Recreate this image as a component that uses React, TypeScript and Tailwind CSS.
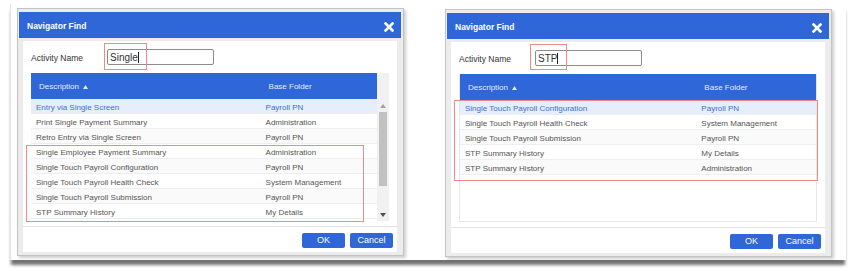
import React from "react";

type Row = [string, string];

const leftRows: Row[] = [
  ["Entry via Single Screen", "Payroll PN"],
  ["Print Single Payment Summary", "Administration"],
  ["Retro Entry via Single Screen", "Payroll PN"],
  ["Single Employee Payment Summary", "Administration"],
  ["Single Touch Payroll Configuration", "Payroll PN"],
  ["Single Touch Payroll Health Check", "System Management"],
  ["Single Touch Payroll Submission", "Payroll PN"],
  ["STP Summary History", "My Details"],
];

const rightRows: Row[] = [
  ["Single Touch Payroll Configuration", "Payroll PN"],
  ["Single Touch Payroll Health Check", "System Management"],
  ["Single Touch Payroll Submission", "Payroll PN"],
  ["STP Summary History", "My Details"],
  ["STP Summary History", "Administration"],
];

function CloseIcon() {
  return (
    <svg width="10" height="10" viewBox="0 0 10 10">
      <path d="M1.5 1.5 L8.5 8.5 M8.5 1.5 L1.5 8.5" stroke="#fff" strokeWidth="2.6" strokeLinecap="square" />
    </svg>
  );
}

function Scrollbar() {
  return (
    <div className="w-[12px] flex flex-col bg-[#f1f1f1]">
      <div className="h-[26px]" />
      <div className="h-[13px] flex items-center justify-center">
        <svg width="6" height="4" viewBox="0 0 6 4">
          <path d="M0 4 L3 0 L6 4 Z" fill="#a3a3a3" />
        </svg>
      </div>
      <div className="mx-[2px] h-[74px] bg-[#c1c1c1]" />
      <div className="flex-1" />
      <div className="h-[13px] flex items-center justify-center">
        <svg width="6" height="4" viewBox="0 0 6 4">
          <path d="M0 0 L6 0 L3 4 Z" fill="#505050" />
        </svg>
      </div>
    </div>
  );
}

function Dialog({
  query,
  rows,
  scroll,
  boxes,
}: {
  query: string;
  rows: Row[];
  scroll: boolean;
  boxes: { l: number; t: number; w: number; h: number }[];
}) {
  return (
    <div className="relative w-[387px] h-[248px] border border-[#c3c3c3] bg-[#ececec] pt-[3px] pl-[1px] pr-[2px] pb-[3px] shadow-[2px_2px_3px_rgba(0,0,0,0.2)] flex flex-col">
      {/* Title bar */}
      <div className="h-[26px] bg-[#2f67d8] flex items-center justify-between pl-[8px] pr-[7px] pt-[3px]">
        <span className="text-white font-bold text-[8.5px]">Navigator Find</span>
        <CloseIcon />
      </div>

      <div className="flex-1 px-[4px] pt-[3px] flex flex-col">
        <div className="flex-1 bg-white flex flex-col">
          {/* Search */}
          <div className="flex flex-col px-[8px] pt-[8px] pb-[5px] border-b border-[#e4e4e4]">
            <div className="flex items-center h-[16px]">
              <span className="w-[76px] text-[8.5px] text-[#333] pt-[3px]">Activity Name</span>
              <div className="w-[107px] h-[16px] border border-[#8c8c8c] rounded-[2px] flex items-center pl-[2px] text-[10px] text-[#333]">
                {query}
                <span className="inline-block w-px h-[11px] bg-[#222]" />
              </div>
            </div>

            <div className={`mt-[8px] h-[148px] flex ${scroll ? "" : "border border-[#e8e8e8] border-t-0"}`}>
              <div className="flex-1 flex flex-col">
                <div className="h-[26px] bg-[#2f67d8] grid grid-cols-[67.8%_1fr] items-center pt-[1px] text-[8px] text-[#e4ebfb]">
                  <span className="pl-[8px] flex items-center gap-[4px]">
                    Description
                    <svg width="5" height="4" viewBox="0 0 5 4">
                      <path d="M0 4 L2.5 0 L5 4 Z" fill="#e4ebfb" />
                    </svg>
                  </span>
                  <span className="pl-[3px]">Base Folder</span>
                </div>
                {rows.map(([d, f], i) => (
                  <div
                    key={i}
                    className={`h-[15px] grid grid-cols-[67.8%_1fr] items-center pt-[3px] text-[8px] border-b border-[#eeeeee] ${
                      i === 0
                        ? "bg-[#e6eefb] text-[#3b6fd2]"
                        : i % 2 === 1
                        ? "bg-white text-[#555]"
                        : "bg-[#fafafa] text-[#555]"
                    }`}
                  >
                    <span className="pl-[5px] whitespace-nowrap">{d}</span>
                    <span className="whitespace-nowrap">{f}</span>
                  </div>
                ))}
              </div>
              {scroll && <Scrollbar />}
            </div>
          </div>

          {/* Footer */}
          <div className="flex-1 flex items-start justify-end gap-[5px] pt-[6px] pr-[4px]">
            <button className="w-[43px] h-[15px] bg-[#2f67d8] text-white text-[9px] rounded-[2px] leading-none">OK</button>
            <button className="w-[43px] h-[15px] bg-[#2f67d8] text-white text-[9px] rounded-[2px] leading-none">Cancel</button>
          </div>
        </div>
      </div>

      {boxes.map((b, i) => (
        <div
          key={i}
          className="absolute border border-[#ee8a8a] pointer-events-none"
          style={{ left: b.l, top: b.t, width: b.w, height: b.h }}
        />
      ))}
    </div>
  );
}

export default function App() {
  return (
    <div
      className="w-[850px] h-[271px] bg-white overflow-hidden pt-[4px] pl-[10px]"
      style={{ fontFamily: "'Liberation Sans', Arial, sans-serif" }}
    >
      <div className="w-[836px] h-[256px] bg-white border-l border-[#e6e6e6] shadow-[0_6px_3px_-1px_rgba(0,0,0,0.55)] flex gap-[41px] pt-[4px] pl-[6px]">
        <Dialog
          query="Single"
          rows={leftRows}
          scroll
          boxes={[
            { l: 86, t: 34, w: 43, h: 27 },
            { l: 8, t: 136, w: 338, h: 77 },
          ]}
        />
        <div className="mt-[1px]">
          <Dialog
            query="STP"
            rows={rightRows}
            scroll={false}
            boxes={[
              { l: 84, t: 34, w: 37, h: 26 },
              { l: 8, t: 90, w: 364, h: 81 },
            ]}
          />
        </div>
      </div>
    </div>
  );
}
